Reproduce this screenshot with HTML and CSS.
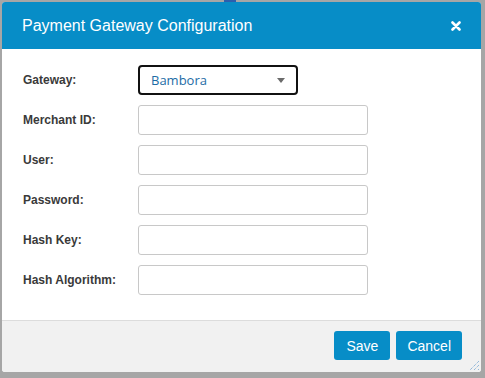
FILE: index.html
```html
<!DOCTYPE html>
<html>
<head>
<meta charset="utf-8">
<link rel="stylesheet" href="styles.css">
</head>
<body>
<div class="peek"></div>
<div class="dialog">
  <div class="header">
    <span class="title">Payment Gateway Configuration</span>
    <svg class="close" width="10" height="10" viewBox="0 0 10 10"><path d="M1.5 1.5 L8.5 8.5 M8.5 1.5 L1.5 8.5" stroke="#fff" stroke-width="2.6" stroke-linecap="round"/></svg>
  </div>
  <div class="body">
    <div class="row">
      <label class="label">Gateway:</label>
      <div class="select"><span class="select-text">Bambora</span><span class="caret"></span></div>
    </div>
    <div class="row"><label class="label">Merchant ID:</label><div class="input"></div></div>
    <div class="row"><label class="label">User:</label><div class="input"></div></div>
    <div class="row"><label class="label">Password:</label><div class="input"></div></div>
    <div class="row"><label class="label">Hash Key:</label><div class="input"></div></div>
    <div class="row"><label class="label">Hash Algorithm:</label><div class="input"></div></div>
  </div>
  <div class="footer">
    <button class="btn">Save</button>
    <button class="btn">Cancel</button>
    <svg class="grip" width="12" height="12" viewBox="0 0 12 12"><path d="M11 2 L2 11 M11 6 L6 11 M11 10 L10 11" stroke="#6a9fd0" stroke-width="1" stroke-dasharray="1 1"/></svg>
  </div>
</div>
</body>
</html>
```

FILE: styles.css
```css
html, body {
  margin: 0;
  padding: 0;
  background: #a6a6a6;
  width: 485px;
  height: 378px;
  overflow: hidden;
  font-family: Arial, "Liberation Sans", sans-serif;
}
.peek {
  width: 12px;
  height: 2px;
  margin-left: 224px;
  background: #2b5fae;
}
.dialog {
  position: relative;
  margin-left: 2px;
  width: 479px;
  height: 370px;
  background: #fff;
  border-radius: 3px;
  display: flex;
  flex-direction: column;
  overflow: hidden;
}
.header {
  height: 47px;
  background: #078dc7;
  display: flex;
  align-items: center;
  justify-content: space-between;
  padding: 0 20px 0 20px;
  box-sizing: border-box;
}
.title {
  color: #fff;
  font-size: 16px;
  padding-top: 1px;
}
.close {
  display: block;
  margin-right: 0;
}
.body {
  flex: 1;
  padding: 16px 0 0 21px;
  display: flex;
  flex-direction: column;
  gap: 10px;
}
.row {
  display: flex;
  align-items: center;
}
.label {
  width: 115px;
  font-size: 12px;
  font-weight: bold;
  color: #3a3a3a;
}
.select {
  width: 160px;
  height: 30px;
  box-sizing: border-box;
  border: 2px solid #111;
  border-radius: 4px;
  display: flex;
  align-items: center;
  justify-content: space-between;
  padding: 0 11px 0 11px;
}
.select-text {
  font-family: "Open Sans", sans-serif;
  font-size: 13px;
  color: #1d6ca5;
}
.caret {
  width: 0;
  height: 0;
  border-left: 4.5px solid transparent;
  border-right: 4.5px solid transparent;
  border-top: 5px solid #6b6b6b;
}
.input {
  width: 230px;
  height: 30px;
  box-sizing: border-box;
  border: 1px solid #c8c8c8;
  border-radius: 3px;
}
.footer {
  height: 52px;
  box-sizing: border-box;
  background: #f1f1f1;
  border-top: 1px solid #dcdcdc;
  display: flex;
  justify-content: flex-end;
  align-items: flex-start;
  padding: 10px 19px 0 0;
  gap: 6px;
}
.btn {
  height: 29px;
  border: none;
  border-radius: 3px;
  background: #078dc7;
  color: #fff;
  font-family: Arial, "Liberation Sans", sans-serif;
  font-size: 14px;
  padding: 0 12px;
}
.btn + .btn {
  padding: 0 11px;
}
.grip {
  position: absolute;
  right: 1px;
  bottom: 1px;
}
```
